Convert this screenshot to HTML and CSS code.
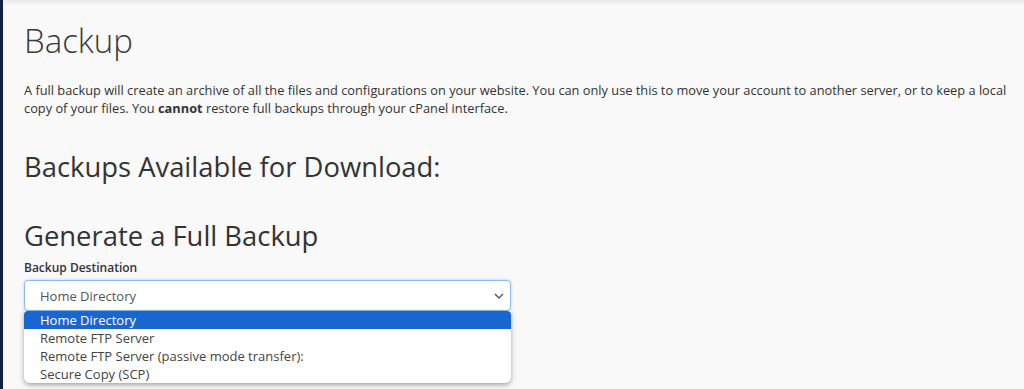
FILE: index.html
```html
<!DOCTYPE html>
<html lang="en">

<head>
    <meta charset="UTF-8">
    <title>Backup</title>
    <link rel="stylesheet" href="styles.css">
</head>

<body>
    <div class="sidebar"></div>
    <div class="content">
        <h1 class="page-title">Backup</h1>
        <p class="intro">A full backup will create an archive of all the files and configurations on your website. You can only use this to move your account to another server, or to keep a local copy of your files. You <strong>cannot</strong> restore full backups through your cPanel interface.</p>
        <h2 class="section-title">Backups Available for Download:</h2>
        <h2 class="section-title gen">Generate a Full Backup</h2>
        <label class="field-label">Backup Destination</label>
        <div class="select-wrap">
            <div class="select">
                <span>Home Directory</span>
                <svg class="chevron" width="10" height="6" viewBox="0 0 10 6"><path d="M1 1l4 4 4-4" fill="none" stroke="#555" stroke-width="1.4"/></svg>
            </div>
            <ul class="options">
                <li class="active">Home Directory</li>
                <li>Remote FTP Server</li>
                <li>Remote FTP Server (passive mode transfer):</li>
                <li>Secure Copy (SCP)</li>
            </ul>
        </div>
    </div>
</body>

</html>
```

FILE: styles.css
```css
* {
    padding: 0;
    margin: 0;
    box-sizing: border-box;
}
body {
    display: flex;
    height: 389px;
    overflow: hidden;
    background: linear-gradient(#e8e8e8, #f9f9f9 5px) #f9f9f9;
    font-family: "Open Sans", "Liberation Sans", sans-serif;
    color: #333;
}
.sidebar {
    width: 3px;
    flex-shrink: 0;
    background: #0f2146;
}
.content {
    flex: 1;
    padding: 18px 8px 0 21px;
}
.page-title {
    font-size: 33px;
    font-weight: 300;
    line-height: 46px;
    color: #3a3a3a;
}
.intro {
    margin-top: 18px;
    font-size: 12.8px;
    line-height: 17.5px;
    color: #333;
}
.intro strong {
    font-weight: 700;
}
.section-title {
    margin-top: 32px;
    font-size: 27.4px;
    font-weight: 400;
    line-height: 36px;
    color: #333;
}
.section-title.gen {
    margin-top: 33px;
}
.field-label {
    display: block;
    margin-top: 5px;
    font-size: 12px;
    font-weight: 600;
    line-height: 18px;
}
.select-wrap {
    width: 487px;
    margin-top: 3px;
}
.select {
    display: flex;
    align-items: center;
    justify-content: space-between;
    height: 31px;
    padding: 0 6px 0 15px;
    background: #fff;
    border: 1px solid #8dbcee;
    border-radius: 4px;
    box-shadow: 0 0 3px rgba(102, 168, 238, .5);
    font-size: 13px;
    color: #555;
}
.options {
    list-style: none;
    background: #fff;
    border-radius: 0 0 6px 6px;
    box-shadow: 0 2px 5px rgba(0, 0, 0, .35);
    overflow: hidden;
}
.options li {
    height: 18px;
    padding-left: 16px;
    font-size: 13px;
    line-height: 18px;
    color: #444;
}
.options li.active {
    background: #1a66d1;
    color: #fff;
    border-radius: 4px 4px 0 0;
}
```
